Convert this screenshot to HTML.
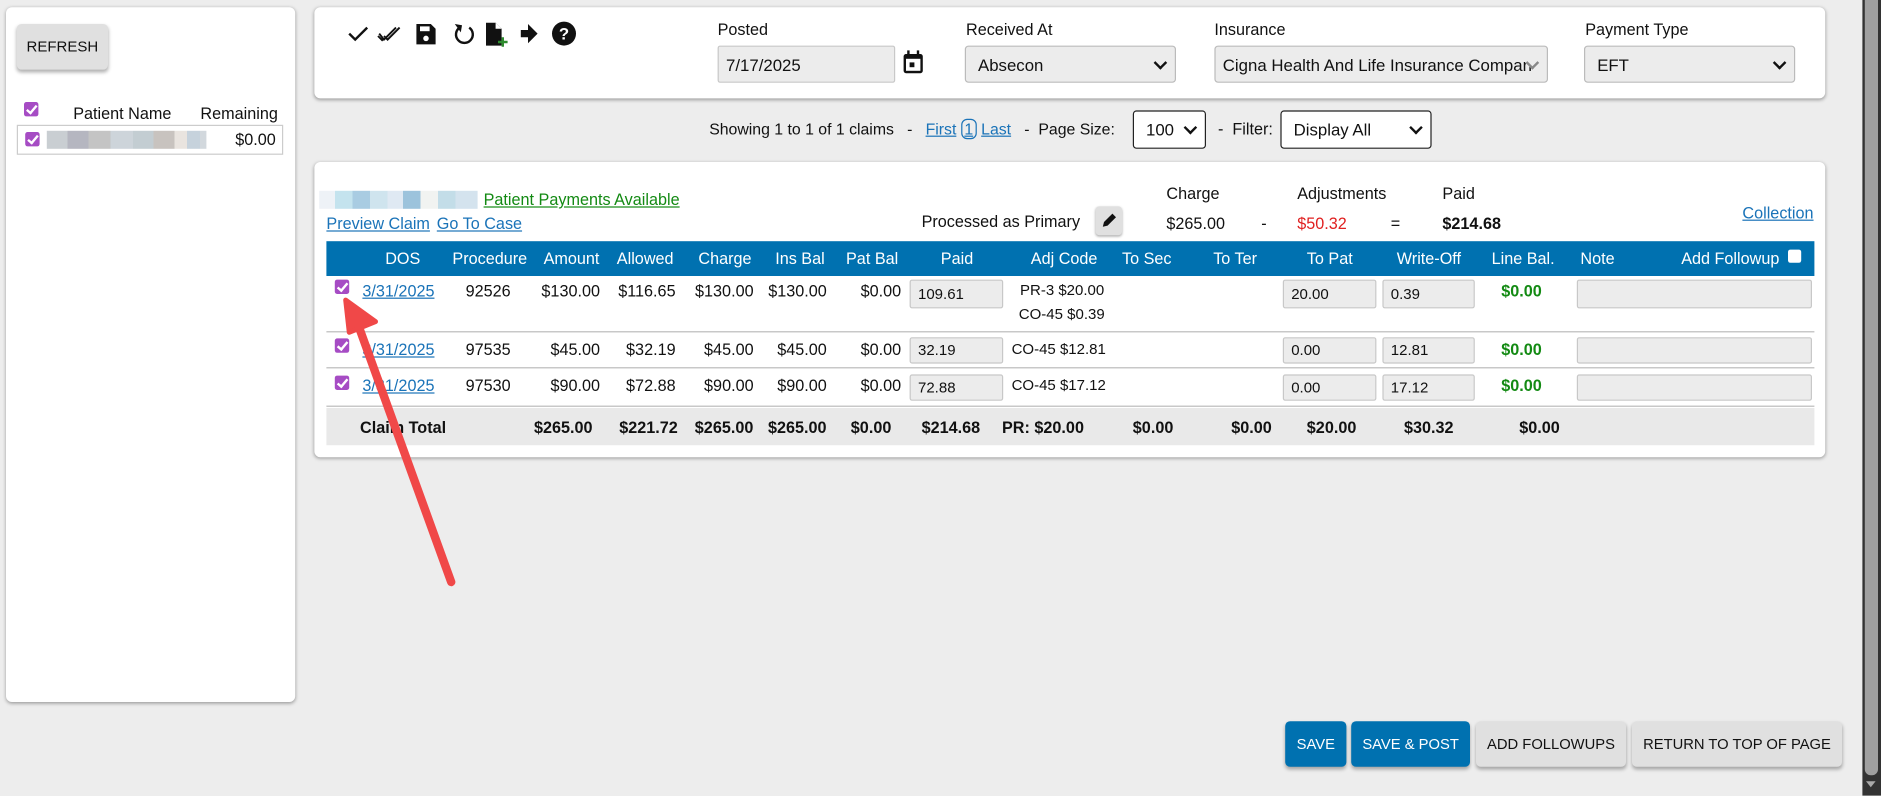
<!DOCTYPE html>
<html><head><meta charset="utf-8"><style>
html,body{margin:0;padding:0;width:1881px;height:795px;overflow:hidden;background:#ededed}
#w{position:absolute;left:0;top:0;width:1568px;height:663px;transform:scale(1.2);transform-origin:0 0;font-family:"Liberation Sans",sans-serif;font-size:13.5px;color:#111}
.a{position:absolute;white-space:nowrap}
.card{position:absolute;background:#fff;border-radius:5px;box-shadow:0 1px 3px rgba(0,0,0,.35)}
.inp{position:absolute;background:#ececec;border:1px solid #c8c8c8;border-radius:2px;box-sizing:border-box;padding-left:6px;font-size:12.5px;display:flex;align-items:center}
.sel{position:absolute;background:#ececec;border:1px solid #bbb;border-radius:3px;box-sizing:border-box;padding-left:10px;display:flex;align-items:center;font-size:14px}
.chev{position:absolute;right:8px;top:50%;width:6px;height:6px;border-right:2px solid #111;border-bottom:2px solid #111;transform:translateY(-70%) rotate(45deg)}
.lnk{color:#1a73b8;text-decoration:underline}
.cb{position:absolute;width:12px;height:12px;background:#a64cc4;border-radius:2px}
.cb:after{content:"";position:absolute;left:4px;top:1px;width:3px;height:7px;border-right:2px solid #fff;border-bottom:2px solid #fff;transform:rotate(40deg)}
.th{position:absolute;color:#fff;top:208px}
.r{text-align:right}
.btn{position:absolute;top:601px;height:38px;border-radius:4px;display:flex;align-items:center;justify-content:center;font-size:12.3px;box-shadow:0 2px 3px rgba(0,0,0,.3)}
.b{font-weight:bold}
.g{color:#138a13;font-weight:bold}
</style></head><body><div id="w">
<div class="card" style="left:5px;top:6px;width:241px;height:579px"></div>
<div class="btn" style="left:14px;top:20px;width:76px;height:38px;background:#e0e0e0;font-size:12.5px">REFRESH</div>
<div class="cb" style="left:20px;top:85px"></div>
<div class="a" style="left:61px;top:87px">Patient Name</div>
<div class="a" style="left:167px;top:87px">Remaining</div>
<div class="a" style="left:14px;top:104px;width:222px;height:25px;border:1px solid #ccc;box-sizing:border-box"></div>
<div class="cb" style="left:21px;top:110px"></div>
<div class="a" style="left:39px;top:109px;width:133px;height:15px;background:linear-gradient(90deg,#c9ced2 0 13%,#b5b6c0 13% 26%,#c4c4c4 26% 40%,#cdd4da 40% 54%,#c3cdd2 54% 67%,#c8c3bf 67% 80%,#e9e4df 80% 88%,#c6d2dc 88% 96%,#d2d8dd 96%)"></div>
<div class="a" style="left:196px;top:109px">$0.00</div>

<div class="card" style="left:262px;top:6px;width:1259px;height:76px"></div>
<svg class="a" style="left:288px;top:16px" width="200" height="24" viewBox="0 0 200 24">
<path d="M3 12l5 5 10-10" stroke="#111" stroke-width="2" fill="none"/>
<path d="M28 12l4 5 10-10M32 14l3 3 10-10M27 14l4 4" stroke="#111" stroke-width="1.6" fill="none"/>
<path d="M59 4h12l4 4v13h-16z" fill="#111"/><rect x="62" y="6" width="8" height="4" fill="#fff"/><circle cx="67" cy="16" r="2.3" fill="#fff"/>
<path d="M103 7a7 7 0 1 1-8 0" stroke="#111" stroke-width="2" fill="none"/><path d="M91 4l6 1-1 6z" fill="#111"/>
<path d="M117 3h8l5 5v14h-13z" fill="#111"/><path d="M125 3v5h5" fill="#fff"/><path d="M131 15v8M127 19h8" stroke="#2e8b2e" stroke-width="2"/>
<path d="M146 9h6v-5l8 8-8 8v-5h-6z" fill="#111"/>
<circle cx="182" cy="12" r="10" fill="#111"/><text x="182" y="17" font-size="14" font-weight="bold" fill="#fff" text-anchor="middle" font-family="Liberation Sans">?</text>
</svg>
<div class="a" style="left:598px;top:17px">Posted</div>
<div class="inp" style="left:598px;top:38px;width:148px;height:31px;font-size:14px;padding-left:6px">7/17/2025</div>
<svg class="a" style="left:751px;top:41px" width="20" height="22" viewBox="0 0 20 22"><rect x="2" y="4" width="16" height="16" rx="2" fill="#111"/><rect x="4" y="8" width="12" height="10" fill="#fff"/><rect x="7" y="11" width="4" height="4" fill="#111"/><rect x="5" y="1" width="2" height="4" fill="#111"/><rect x="13" y="1" width="2" height="4" fill="#111"/></svg>
<div class="a" style="left:805px;top:17px">Received At</div>
<div class="sel" style="left:804px;top:38px;width:176px;height:31px">Absecon<span class="chev"></span></div>
<div class="a" style="left:1012px;top:17px">Insurance</div>
<div class="sel" style="left:1012px;top:38px;width:278px;height:31px;padding-left:6px;overflow:hidden">Cigna Health And Life Insurance Compan<span class="chev" style="border-color:#888;background:#ececec"></span></div>
<div class="a" style="left:1321px;top:17px">Payment Type</div>
<div class="sel" style="left:1320px;top:38px;width:176px;height:31px">EFT<span class="chev"></span></div>

<div class="a" style="left:591px;top:100px;font-size:13.2px">Showing 1 to 1 of 1 claims &nbsp; - &nbsp; <span class="lnk">First</span> <span style="border:1px solid #1a73b8;border-radius:5px;color:#1a73b8;padding:0 2px;text-decoration:underline">1</span> <span class="lnk">Last</span> &nbsp; - &nbsp;Page Size:</div>
<div class="sel" style="left:944px;top:92px;width:61px;height:32px;background:#fff;border-color:#222">100<span class="chev"></span></div>
<div class="a" style="left:1015px;top:100px">- &nbsp;Filter:</div>
<div class="sel" style="left:1067px;top:92px;width:126px;height:32px;background:#fff;border-color:#222">Display All<span class="chev"></span></div>

<div class="card" style="left:262px;top:135px;width:1259px;height:246px"></div>
<div class="a" style="left:266px;top:159px;width:132px;height:15px;background:linear-gradient(90deg,#eef2f7 0 10%,#c4e3ee 10% 21%,#a9cce2 21% 32%,#cfe4ee 32% 43%,#dfe9f3 43% 53%,#9cc3dc 53% 64%,#f1f3f1 64% 75%,#c3dde8 75% 86%,#d4e3ee 86%)"></div>
<div class="a" style="left:403px;top:159px;color:#138a13;text-decoration:underline">Patient Payments Available</div>
<div class="a lnk" style="left:272px;top:179px">Preview Claim</div>
<div class="a lnk" style="left:364px;top:179px">Go To Case</div>
<div class="a" style="left:768px;top:177px">Processed as Primary</div>
<div class="a" style="left:913px;top:172px;width:22px;height:24px;background:#e0e0e0;border-radius:3px;box-shadow:0 1px 2px rgba(0,0,0,.35)"><svg width="22" height="24" viewBox="0 0 22 24"><path d="M6 17l1-4 7-7 3 3-7 7z" fill="#111"/></svg></div>
<div class="a" style="left:972px;top:154px">Charge</div>
<div class="a" style="left:972px;top:179px">$265.00</div>
<div class="a" style="left:1051px;top:179px">-</div>
<div class="a" style="left:1081px;top:154px">Adjustments</div>
<div class="a" style="left:1081px;top:179px;color:#e02020">$50.32</div>
<div class="a" style="left:1159px;top:179px">=</div>
<div class="a" style="left:1202px;top:154px">Paid</div>
<div class="a b" style="left:1202px;top:179px">$214.68</div>
<div class="a lnk" style="left:1452px;top:170px">Collection</div>

<div class="a" style="left:272px;top:201px;width:1240px;height:29px;background:#0071b0"></div>
<div class="th" style="left:321px">DOS</div>
<div class="th" style="left:377px">Procedure</div>
<div class="th" style="left:453px">Amount</div>
<div class="th" style="left:514px">Allowed</div>
<div class="th" style="left:582px">Charge</div>
<div class="th" style="left:646px">Ins Bal</div>
<div class="th" style="left:705px">Pat Bal</div>
<div class="th" style="left:784px">Paid</div>
<div class="th" style="left:859px">Adj Code</div>
<div class="th" style="left:935px">To Sec</div>
<div class="th" style="left:1011px">To Ter</div>
<div class="th" style="left:1089px">To Pat</div>
<div class="th" style="left:1164px">Write-Off</div>
<div class="th" style="left:1243px">Line Bal.</div>
<div class="th" style="left:1317px">Note</div>
<div class="th" style="left:1401px">Add Followup</div>
<div class="a" style="left:1490px;top:208px;width:11px;height:11px;background:#fff;border-radius:2px"></div>

<div class="a" style="left:272px;top:276px;width:1240px;border-top:1px solid #bbb"></div>
<div class="a" style="left:272px;top:306px;width:1240px;border-top:1px solid #bbb"></div>
<div class="a" style="left:272px;top:338px;width:1240px;border-top:1px solid #bbb"></div>
<div class="a" style="left:272px;top:340px;width:1240px;height:31px;background:#e9e9e9"></div>

<div class="cb" style="left:279px;top:233px"></div>
<div class="a lnk" style="left:302px;top:235px">3/31/2025</div>
<div class="a" style="left:388px;top:235px">92526</div>
<div class="a r" style="left:430px;top:235px;width:70px">$130.00</div>
<div class="a r" style="left:493px;top:235px;width:70px">$116.65</div>
<div class="a r" style="left:558px;top:235px;width:70px">$130.00</div>
<div class="a r" style="left:619px;top:235px;width:70px">$130.00</div>
<div class="a r" style="left:681px;top:235px;width:70px">$0.00</div>
<div class="inp" style="left:758px;top:233px;width:78px;height:24px">109.61</div>
<div class="a" style="left:850px;top:235px;font-size:12.5px">PR-3 $20.00</div>
<div class="a" style="left:849px;top:255px;font-size:12.5px">CO-45 $0.39</div>
<div class="inp" style="left:1069px;top:233px;width:78px;height:24px">20.00</div>
<div class="inp" style="left:1152px;top:233px;width:77px;height:24px">0.39</div>
<div class="a g" style="left:1251px;top:235px">$0.00</div>
<div class="inp" style="left:1314px;top:233px;width:196px;height:24px"></div>
<div class="cb" style="left:279px;top:282px"></div>
<div class="a lnk" style="left:302px;top:284px">3/31/2025</div>
<div class="a" style="left:388px;top:284px">97535</div>
<div class="a r" style="left:430px;top:284px;width:70px">$45.00</div>
<div class="a r" style="left:493px;top:284px;width:70px">$32.19</div>
<div class="a r" style="left:558px;top:284px;width:70px">$45.00</div>
<div class="a r" style="left:619px;top:284px;width:70px">$45.00</div>
<div class="a r" style="left:681px;top:284px;width:70px">$0.00</div>
<div class="inp" style="left:758px;top:281px;width:78px;height:22px">32.19</div>
<div class="a" style="left:843px;top:284px;font-size:12.5px">CO-45 $12.81</div>
<div class="inp" style="left:1069px;top:281px;width:78px;height:22px">0.00</div>
<div class="inp" style="left:1152px;top:281px;width:77px;height:22px">12.81</div>
<div class="a g" style="left:1251px;top:284px">$0.00</div>
<div class="inp" style="left:1314px;top:281px;width:196px;height:22px"></div>
<div class="cb" style="left:279px;top:313px"></div>
<div class="a lnk" style="left:302px;top:314px">3/31/2025</div>
<div class="a" style="left:388px;top:314px">97530</div>
<div class="a r" style="left:430px;top:314px;width:70px">$90.00</div>
<div class="a r" style="left:493px;top:314px;width:70px">$72.88</div>
<div class="a r" style="left:558px;top:314px;width:70px">$90.00</div>
<div class="a r" style="left:619px;top:314px;width:70px">$90.00</div>
<div class="a r" style="left:681px;top:314px;width:70px">$0.00</div>
<div class="inp" style="left:758px;top:312px;width:78px;height:22px">72.88</div>
<div class="a" style="left:843px;top:314px;font-size:12.5px">CO-45 $17.12</div>
<div class="inp" style="left:1069px;top:312px;width:78px;height:22px">0.00</div>
<div class="inp" style="left:1152px;top:312px;width:77px;height:22px">17.12</div>
<div class="a g" style="left:1251px;top:314px">$0.00</div>
<div class="inp" style="left:1314px;top:312px;width:196px;height:22px"></div>
<div class="a b" style="left:300px;top:349px">Claim Total</div>
<div class="a b" style="left:445px;top:349px">$265.00</div>
<div class="a b" style="left:516px;top:349px">$221.72</div>
<div class="a b" style="left:579px;top:349px">$265.00</div>
<div class="a b" style="left:640px;top:349px">$265.00</div>
<div class="a b" style="left:709px;top:349px">$0.00</div>
<div class="a b" style="left:768px;top:349px">$214.68</div>
<div class="a b" style="left:835px;top:349px">PR: $20.00</div>
<div class="a b" style="left:944px;top:349px">$0.00</div>
<div class="a b" style="left:1026px;top:349px">$0.00</div>
<div class="a b" style="left:1089px;top:349px">$20.00</div>
<div class="a b" style="left:1170px;top:349px">$30.32</div>
<div class="a b" style="left:1266px;top:349px">$0.00</div>

<svg class="a" style="left:0;top:0" width="1568" height="663"><path d="M376 485L300 275" stroke="#f04848" stroke-width="7" stroke-linecap="round"/><path d="M288 250l25 18-22 9z" fill="#f04848" stroke="#f04848" stroke-width="4" stroke-linejoin="round"/></svg>

<div class="btn" style="left:1071px;width:51px;background:#0071b0;color:#fff">SAVE</div>
<div class="btn" style="left:1126px;width:99px;background:#0071b0;color:#fff">SAVE &amp; POST</div>
<div class="btn" style="left:1230px;width:125px;background:#e0e0e0">ADD FOLLOWUPS</div>
<div class="btn" style="left:1360px;width:175px;background:#e0e0e0">RETURN TO TOP OF PAGE</div>

<div class="a" style="left:1552px;top:0;width:16px;height:663px;background:#333"></div>
<div class="a" style="left:1554px;top:0;width:11px;height:646px;background:#a0a0a0;border-radius:0 0 5px 5px"></div>
<div class="a" style="left:1555px;top:651px;width:0;height:0;border-left:4px solid transparent;border-right:4px solid transparent;border-top:5px solid #aaa"></div>
</div></body></html>
